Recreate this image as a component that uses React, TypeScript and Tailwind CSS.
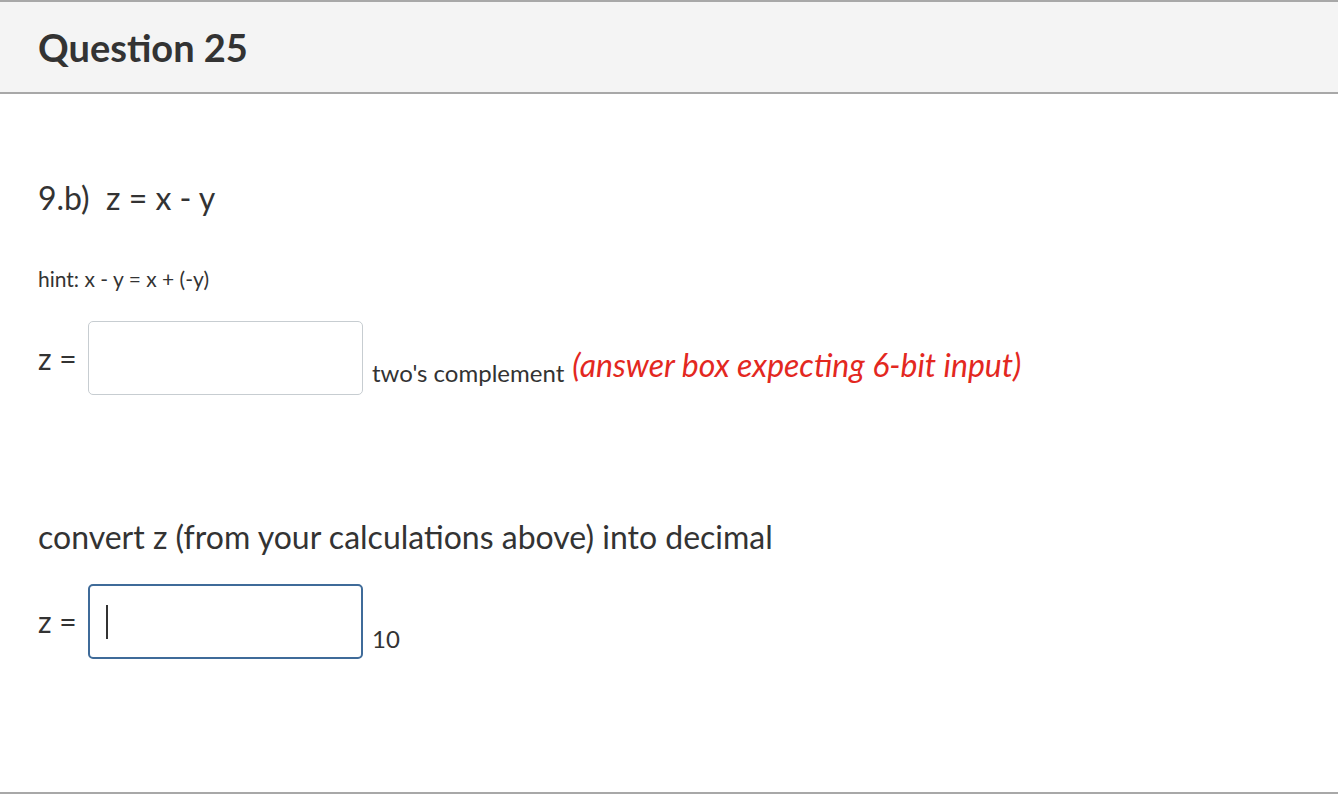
import React from "react";

export default function App() {
  return (
    <div className="w-[1338px] h-[794px] bg-white font-['Lato','Noto_Sans',sans-serif] text-[#333] flex flex-col">
      <div className="h-[94px] border-y-2 border-[#a8a8a8] bg-[#f4f4f4] flex items-center px-[38px]">
        <h2 className="text-[38px] font-bold leading-none">Question 25</h2>
      </div>
      <div className="flex-1 border-b-2 border-[#a8a8a8] px-[38px]">
        <p className="mt-[88px] text-[32px] leading-none">9.b)&nbsp; z = x - y</p>
        <p className="mt-[54px] text-[21px] leading-none">hint: x - y = x + (-y)</p>
        <div className="mt-[32px] flex items-center">
          <span className="text-[30px] w-[50px]">z =</span>
          <div className="w-[275px] h-[74px] rounded-[5px] border border-[#c7cdd1]" />
          <span className="ml-[9px] self-end mb-[4px] text-[24px]">two's complement</span>
          <span className="ml-[8px] mb-[6px] self-end text-[32px] italic text-[#e3281f]">(answer box expecting 6-bit input)</span>
        </div>
        <p className="mt-[126px] text-[32px] leading-none">convert z (from your calculations above) into decimal</p>
        <div className="mt-[31px] flex items-center">
          <span className="text-[30px] w-[50px]">z =</span>
          <div className="w-[275px] h-[75px] rounded-[5px] border-2 border-[#3f6b99] flex items-center pl-[16px]">
            <div className="w-[2px] h-[34px] bg-[#333]" />
          </div>
          <span className="ml-[9px] self-end mb-[2px] text-[24px]">10</span>
        </div>
      </div>
    </div>
  );
}
